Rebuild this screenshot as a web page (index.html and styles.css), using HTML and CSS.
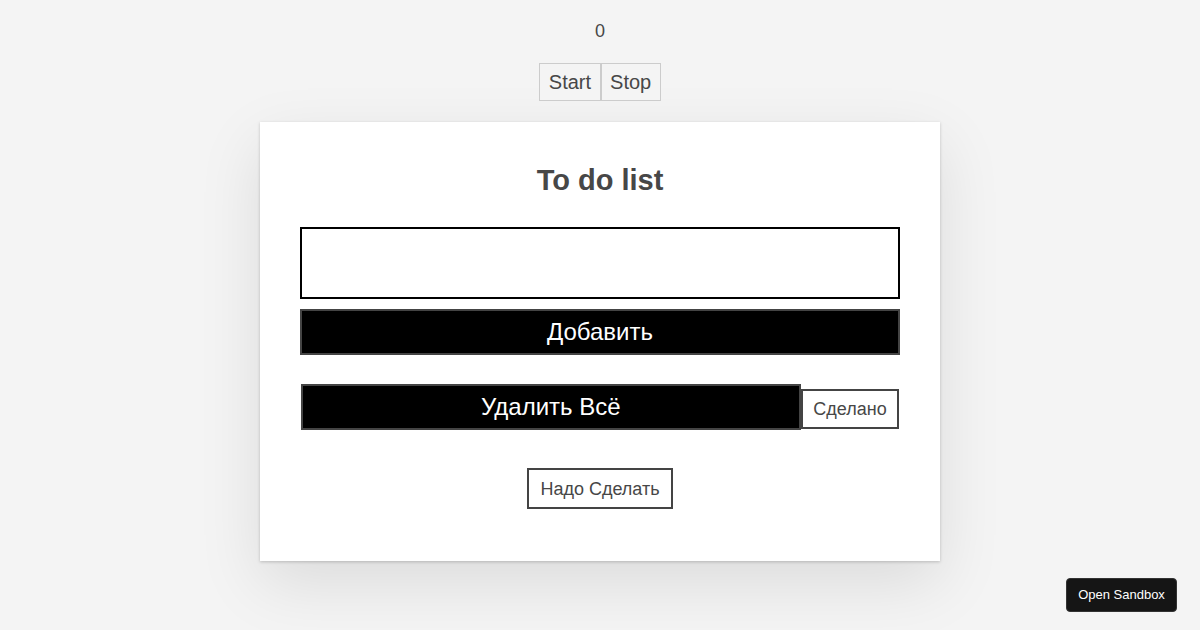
FILE: index.html
```html
<!DOCTYPE html>
<html lang="ru">
<head>
<meta charset="utf-8">
<title>To do list</title>
<link rel="stylesheet" href="styles.css">
</head>
<body>
<div class="timer">
  <div class="count">0</div>
  <div class="timer-buttons">
    <button class="tbtn">Start</button><button class="tbtn">Stop</button>
  </div>
</div>
<main class="card">
  <h1 class="title">To do list</h1>
  <input class="field" type="text">
  <button class="big-btn add">Добавить</button>
  <div class="row">
    <button class="big-btn del">Удалить Всё</button>
    <button class="small-btn done">Сделано</button>
  </div>
  <div class="center">
    <button class="small-btn todo">Надо Сделать</button>
  </div>
</main>
<a class="sandbox">Open Sandbox</a>
</body>
</html>
```
FILE: styles.css
```css
html {
  background: #f4f4f4;
}
body {
  margin: 0;
  padding: 0;
  min-height: 100vh;
  font-family: "Liberation Sans", Arial, sans-serif;
  color: #474747;
}
.timer {
  display: flex;
  flex-direction: column;
  align-items: center;
  padding-top: 20px;
}
.count {
  font-size: 18px;
  line-height: 22px;
}
.timer-buttons {
  display: flex;
  margin-top: 21px;
}
.tbtn {
  box-sizing: border-box;
  height: 38px;
  font-family: inherit;
  font-size: 20px;
  line-height: 22px;
  color: #474747;
  background: #f4f4f4;
  border: 1px solid #ccc;
  padding: 7px 8.5px;
  margin: 0;
}
.card {
  width: 600px;
  margin: 21px auto 0;
  background: #fff;
  padding: 40px 40px 52px;
  box-shadow: 0 1px 3px rgba(0,0,0,0.2), 0 22px 60px rgba(0,0,0,0.1);
  display: flex;
  flex-direction: column;
}
.title {
  margin: 0 0 29px;
  text-align: center;
  font-size: 29px;
  line-height: 36px;
  font-weight: bold;
  color: #474747;
}
.field {
  box-sizing: border-box;
  width: 600px;
  height: 72px;
  border: 2px solid #000;
  margin: 0;
  padding: 0 10px;
  font-family: inherit;
  font-size: 20px;
  background: #fff;
}
.big-btn {
  box-sizing: border-box;
  height: 46px;
  background: #000;
  color: #fff;
  border: 2px solid #444;
  font-family: inherit;
  font-size: 24px;
  line-height: 28px;
  padding: 7px 0;
  margin: 0;
}
.add {
  width: 600px;
  margin-top: 10px;
}
.row {
  display: flex;
  justify-content: center;
  align-items: baseline;
  margin-top: 29px;
}
.del {
  width: 500px;
}
.small-btn {
  box-sizing: border-box;
  background: #fff;
  color: #474747;
  border: 2px solid #444;
  font-family: inherit;
  font-size: 18px;
  line-height: 20px;
  padding: 8px 11px;
  margin: 0;
}
.done {
  height: 40px;
  padding: 8px 10.5px;
}
.todo {
  height: 41px;
}
.center {
  display: flex;
  justify-content: center;
  margin-top: 38px;
}
.sandbox {
  position: fixed;
  right: 23px;
  bottom: 18px;
  width: 111px;
  height: 34px;
  box-sizing: border-box;
  background: #151515;
  color: #fff;
  border-radius: 4px;
  font-size: 13px;
  line-height: 32px;
  text-align: center;
  border: 1px solid #333;
}
```
